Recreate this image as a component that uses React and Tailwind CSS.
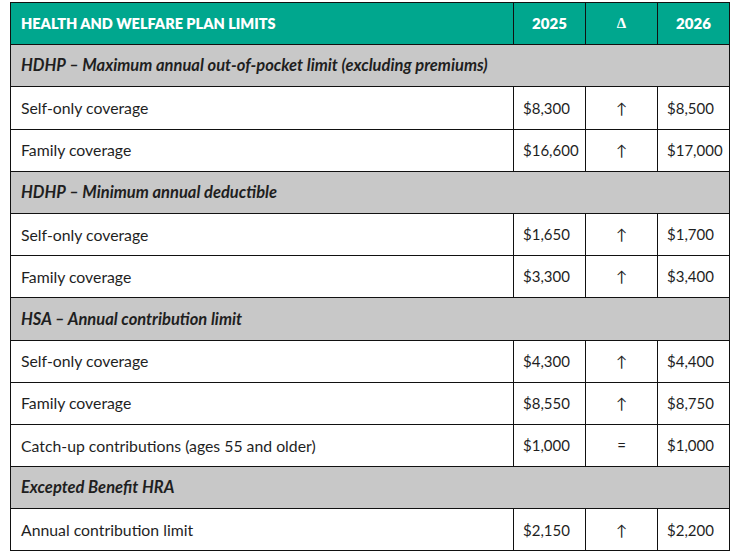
const sections = [
  {
    title: 'HDHP – Maximum annual out-of-pocket limit (excluding premiums)',
    rows: [
      { label: 'Self-only coverage', y2025: '$8,300', delta: '↑', y2026: '$8,500' },
      { label: 'Family coverage', y2025: '$16,600', delta: '↑', y2026: '$17,000' },
    ],
  },
  {
    title: 'HDHP – Minimum annual deductible',
    rows: [
      { label: 'Self-only coverage', y2025: '$1,650', delta: '↑', y2026: '$1,700' },
      { label: 'Family coverage', y2025: '$3,300', delta: '↑', y2026: '$3,400' },
    ],
  },
  {
    title: 'HSA – Annual contribution limit',
    rows: [
      { label: 'Self-only coverage', y2025: '$4,300', delta: '↑', y2026: '$4,400' },
      { label: 'Family coverage', y2025: '$8,550', delta: '↑', y2026: '$8,750' },
      { label: 'Catch-up contributions (ages 55 and older)', y2025: '$1,000', delta: '=', y2026: '$1,000' },
    ],
  },
  {
    title: 'Excepted Benefit HRA',
    rows: [
      { label: 'Annual contribution limit', y2025: '$2,150', delta: '↑', y2026: '$2,200' },
    ],
  },
];

function DataRow({ row }) {
  return (
    <div className="flex h-[42.2px] border-t border-[#111] bg-white text-[15px] text-[#1f1f1f]">
      <div className="w-[502px] flex items-center pl-[10px] text-[15.8px]">{row.label}</div>
      <div className="w-[72px] border-l border-[#111] flex items-center pl-[9px]">{row.y2025}</div>
      <div className="w-[72px] border-l border-[#111] flex items-center justify-center text-[15px]">
        {row.delta}
      </div>
      <div className="w-[72px] border-l border-[#111] flex items-center pl-[9px]">{row.y2026}</div>
    </div>
  );
}

export default function App() {
  return (
    <div className="min-h-[558px] bg-white pt-[2px] font-['Lato','Noto_Sans',sans-serif]">
      <div className="ml-[10px] w-[720px] border border-[#111]">
        {/* Header */}
        <div className="flex h-[41.2px] bg-[#00a78e] text-white font-extrabold text-[14.5px]">
          <div className="w-[502px] flex items-center pl-[10px]">
            HEALTH AND WELFARE PLAN LIMITS
          </div>
          <div className="w-[72px] border-l border-[#111] flex items-center justify-center text-[15px]">
            2025
          </div>
          <div className="w-[72px] border-l border-[#111] flex items-center justify-center font-['Liberation_Serif',serif] font-bold text-[15px]">
            Δ
          </div>
          <div className="w-[72px] border-l border-[#111] flex items-center justify-center text-[15px]">
            2026
          </div>
        </div>

        {sections.map((section) => (
          <div key={section.title}>
            <div className="flex h-[42.2px] items-center border-t border-[#111] bg-[#c8c8c8] pl-[10px] text-[16.5px] font-bold italic text-[#1f1f1f]">
              {section.title}
            </div>
            {section.rows.map((row, i) => (
              <DataRow key={i} row={row} />
            ))}
          </div>
        ))}
      </div>
    </div>
  );
}
